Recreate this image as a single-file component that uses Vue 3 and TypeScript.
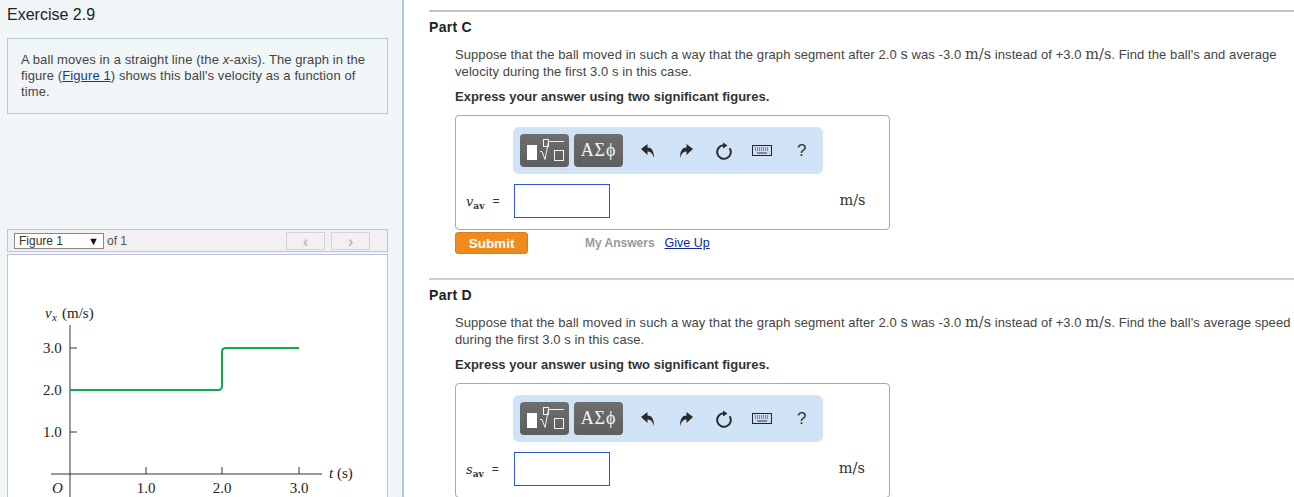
<script setup lang="ts">
interface Part {
  title: string
  ending: string
  second: string
  symbol: string
  sub: string
  showSubmit: boolean
}

const parts: Part[] = [
  {
    title: 'Part C',
    ending: " Find the ball's and average",
    second: 'velocity during the first 3.0 s in this case.',
    symbol: 'v',
    sub: 'av',
    showSubmit: true,
  },
  {
    title: 'Part D',
    ending: " Find the ball's average speed",
    second: 'during the first 3.0 s in this case.',
    symbol: 's',
    sub: 'av',
    showSubmit: false,
  },
]

// tick positions inside the graph svg
const yTicks = [
  { label: '3.0', y: 93 },
  { label: '2.0', y: 135 },
  { label: '1.0', y: 177 },
]
const xTicks = [
  { label: '1.0', x: 146 },
  { label: '2.0', x: 222 },
  { label: '3.0', x: 299 },
]
</script>

<template>
  <div class="page">
    <aside class="left">
      <h1 class="title">Exercise 2.9</h1>
      <div class="intro">
        A ball moves in a straight line (the <i>x</i>-axis). The graph in the figure
        (<a href="#">Figure 1</a>) shows this ball's velocity as a function of time.
      </div>

      <div class="figbar">
        <div class="figselect">
          <span>Figure 1</span>
          <span class="caret">▼</span>
        </div>
        <span class="of">of 1</span>
        <div class="pager">
          <button class="pagebtn">‹</button>
          <button class="pagebtn">›</button>
        </div>
      </div>

      <div class="figure">
        <svg class="graph" width="379" height="243" viewBox="8 0 379 243">
          <g class="axes">
            <line x1="70" y1="70" x2="70" y2="243" />
            <line x1="51" y1="219" x2="322" y2="219" />
            <line v-for="t in yTicks" :key="t.label" x1="70" :y1="t.y" x2="77" :y2="t.y" />
            <line v-for="t in xTicks" :key="t.label" :x1="t.x" y1="212" :x2="t.x" y2="219" />
          </g>
          <path class="curve" d="M70 135H218Q222 135 222 131V97Q222 93 226 93H299" />
          <text x="45" y="63" class="ital">v</text>
          <text x="52" y="66" class="ital small">x</text>
          <text x="62" y="63">(m/s)</text>
          <text v-for="t in yTicks" :key="t.label" x="43" :y="t.y + 5">{{ t.label }}</text>
          <text x="52" y="238" class="ital">O</text>
          <text v-for="t in xTicks" :key="t.label" :x="t.x" y="238" text-anchor="middle">{{ t.label }}</text>
          <text x="329" y="223" class="ital">t</text>
          <text x="337" y="223">(s)</text>
        </svg>
      </div>
    </aside>

    <main class="right">
      <section v-for="part in parts" :key="part.title" class="part">
        <h2 class="part-title">{{ part.title }}</h2>
        <div class="part-body">
          <p class="question">
            Suppose that the ball moved in such a way that the graph segment after 2.0 <span class="math">s</span>
            was -3.0 <span class="math">m/s</span> instead of +3.0 <span class="math">m/s</span>.{{ part.ending }}
            <br />{{ part.second }}
          </p>
          <p class="hint">Express your answer using two significant figures.</p>

          <div class="answer">
            <div class="toolbar">
              <button class="tpl">
                <svg width="49" height="33" viewBox="0 0 49 33">
                  <rect x="7" y="11" width="10" height="15" fill="#fff" />
                  <rect x="23.5" y="5.5" width="5" height="7" fill="none" stroke="#f2f2f2" />
                  <path d="M20 17.500h2l3 8 3.500-18H44" fill="none" stroke="#f2f2f2" />
                  <rect x="34.500" y="16.500" width="9" height="10" fill="none" stroke="#f2f2f2" />
                </svg>
              </button>
              <button class="tpl greek">ΑΣϕ</button>
              <svg class="ic undo" width="16" height="16" viewBox="0 0 16 16">
                <path d="M1 6L7.500 1v3.500c4 0 6.500 3 6.500 10.500-1.500-4.500-3.500-6.500-6.500-6.500V12z" fill="#2b2b2b" />
              </svg>
              <svg class="ic redo" width="16" height="16" viewBox="0 0 16 16">
                <path d="M15 6L8.500 1v3.500c-4 0-6.500 3-6.500 10.500 1.500-4.500 3.500-6.500 6.500-6.500V12z" fill="#2b2b2b" />
              </svg>
              <svg class="ic reset" width="18" height="18" viewBox="0 0 18 18">
                <path d="M14.600 6.200A6.800 6.800 0 1 1 8 3.300" fill="none" stroke="#2b2b2b" stroke-width="2" />
                <path d="M8 0.500l4.500 3-4.500 3z" fill="#2b2b2b" />
              </svg>
              <svg class="ic kbd" width="20" height="11" viewBox="0 0 20 11">
                <rect x=".5" y=".5" width="19" height="10" fill="#cfdcec" stroke="#1f2636" />
                <path d="M3 3h14M3 5h14" stroke="#2f3648" stroke-dasharray="1 1" />
                <path d="M5 8h10" stroke="#2f3648" />
              </svg>
              <span class="help">?</span>
            </div>
            <div class="entry">
              <span class="symbol"><i>{{ part.symbol }}</i><b>{{ part.sub }}</b></span>
              <span class="equals">=</span>
              <div class="field"></div>
              <span class="unit">m/s</span>
            </div>
          </div>

          <div v-if="part.showSubmit" class="actions">
            <button class="submit">Submit</button>
            <span class="mine">My Answers</span>
            <a href="#" class="giveup">Give Up</a>
          </div>
        </div>
      </section>
    </main>
  </div>
</template>

<style>
html,
body {
  margin: 0;
  overflow: hidden;
}
</style>

<style scoped>
.page {
  display: flex;
  width: 1294px;
  height: 497px;
  overflow: hidden;
  font-family: "Liberation Sans", Arial, sans-serif;
  background: #fff;
  color: #333;
}

.left {
  box-sizing: border-box;
  width: 404px;
  flex: none;
  padding: 0 14px 0 7px;
  background: repeating-conic-gradient(#e6f3fb 0 25%, #f5fafc 0 50%) 0 0 / 2px 2px;
  border-right: 2px solid #b4c8e6;
}

.title {
  margin: 0;
  padding-top: 5px;
  font-size: 16px;
  line-height: 19px;
  font-weight: 400;
  color: #222;
}

.intro {
  box-sizing: border-box;
  height: 76px;
  margin-top: 14px;
  padding: 13px 13px 0;
  border: 1px solid #b5c7da;
  font-size: 13px;
  letter-spacing: 0.1px;
  line-height: 16px;
  color: #444;
}

.intro a {
  color: #1a3a8c;
}

.figbar {
  box-sizing: border-box;
  display: flex;
  align-items: center;
  height: 23px;
  margin-top: 115px;
  padding: 0 6px;
  border: 1px solid #bcc3dc;
  background: repeating-conic-gradient(#ece9f4 0 25%, #f8f6f8 0 50%) 0 0 / 2px 2px;
  font-size: 12px;
}

.figselect {
  box-sizing: border-box;
  display: flex;
  justify-content: space-between;
  align-items: center;
  width: 90px;
  height: 16px;
  padding: 0 4px;
  border: 1px solid #888;
  background: #fff;
  color: #333;
}

.caret {
  font-size: 11px;
  color: #111;
}

.of {
  margin-left: 3px;
  color: #555;
}

.pager {
  display: flex;
  gap: 6px;
  margin-left: auto;
  margin-right: 11px;
}

.pagebtn {
  width: 39px;
  height: 18px;
  padding: 0 0 3px;
  border: 1px solid #d4d4d4;
  background: transparent;
  color: #bbb;
  font: bold 17px/1 "Liberation Sans", sans-serif;
}

.figure {
  box-sizing: border-box;
  height: 250px;
  margin-top: 2px;
  border: 1px solid #bcc3e0;
  background: #fff;
}

.graph {
  display: block;
  font-family: "Liberation Serif", serif;
  font-size: 15px;
  fill: #222;
}

.axes line {
  stroke: #333;
  stroke-width: 1;
}

.curve {
  fill: none;
  stroke: #12a850;
  stroke-width: 2;
}

.ital {
  font-style: italic;
}

.small {
  font-size: 11px;
}

.right {
  flex: 1;
  min-width: 0;
  padding: 10px 0 0 25px;
}

.part {
  box-sizing: border-box;
  height: 268px;
  padding-top: 7px;
  border-top: 2px solid #c4c4c4;
}

.part + .part {
  border-top-color: #d8c8d8;
}

.part-title {
  margin: 0;
  font-size: 14px;
  letter-spacing: 0.3px;
  line-height: 16px;
  font-weight: 700;
  color: #222;
}

.part-body {
  padding-left: 26px;
}

.question {
  margin: 11px 0 0;
  font-size: 13px;
  letter-spacing: 0.08px;
  line-height: 17px;
  white-space: nowrap;
  color: #444;
}

.math {
  font-family: "DejaVu Serif", serif;
  font-size: 14.5px;
  letter-spacing: 0;
}

.hint {
  margin: 9px 0 0;
  font-size: 13px;
  line-height: 16px;
  font-weight: 700;
  color: #333;
}

.answer {
  box-sizing: border-box;
  width: 435px;
  height: 115px;
  margin-top: 10px;
  padding: 11px 0 0 57px;
  border: 1px solid #a4aca4;
  border-radius: 4px;
}

.toolbar {
  box-sizing: border-box;
  display: flex;
  align-items: center;
  width: 310px;
  height: 47px;
  padding-left: 7px;
  border-radius: 6px;
  background: repeating-conic-gradient(#c3dff9 0 25%, #d6e9fc 0 50%) 0 0 / 2px 2px;
}

.tpl {
  display: flex;
  align-items: center;
  justify-content: center;
  width: 49px;
  height: 33px;
  padding: 0;
  border: 0;
  border-radius: 4px;
  background: linear-gradient(#6e6e6e, #5e5e5e);
  color: #f4f4f4;
}

.greek {
  margin-left: 5px;
  font: 18px "Liberation Serif", serif;
  letter-spacing: 0.8px;
}

.ic {
  flex: none;
}

.undo {
  margin-left: 17px;
}

.redo {
  margin-left: 22px;
}

.reset {
  margin-left: 21px;
}

.kbd {
  margin-left: 19px;
}

.help {
  margin-left: 25px;
  font-size: 17px;
  color: #333;
}

.entry {
  display: flex;
  align-items: center;
  margin: 10px 0 0 -47px;
  font-family: "DejaVu Serif", serif;
  font-size: 13px;
  color: #333;
}

.symbol i {
  font-size: 13px;
}

.symbol b {
  position: relative;
  top: 3px;
  font-size: 9px;
}

.equals {
  margin: 0 15px 0 8px;
  font-family: "Liberation Sans", sans-serif;
  font-size: 12px;
}

.field {
  box-sizing: border-box;
  width: 96px;
  height: 34px;
  border: 1px solid #2f55d4;
  background: #fff;
}

.unit {
  margin: 0 0 3px 229px;
  font-size: 14.5px;
}

.actions {
  display: flex;
  align-items: center;
  margin-top: 2px;
  font-size: 12px;
  font-weight: 700;
}

.submit {
  width: 73px;
  height: 22px;
  padding: 0;
  border: 1px solid #d9801a;
  border-radius: 3px;
  background: #f08c1e;
  color: #fff;
  font: bold 13.5px "Liberation Sans", sans-serif;
}

.mine {
  margin-left: 57px;
  color: #999;
}

.giveup {
  margin-left: 10px;
  color: #0a2a9a;
  font-size: 12.5px;
  font-weight: 400;
}
</style>
